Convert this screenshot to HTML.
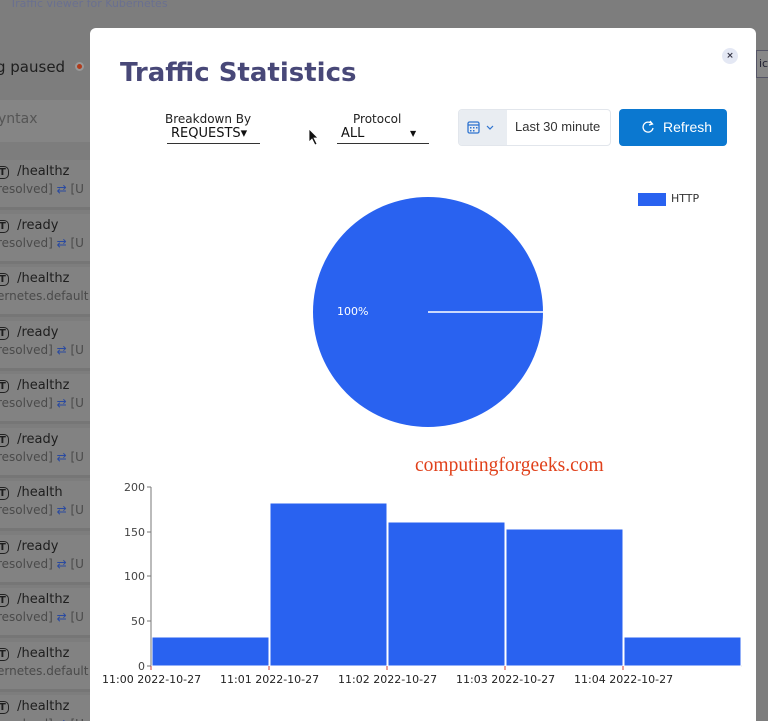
<!DOCTYPE html>
<html><head><meta charset="utf-8"><style>
*{margin:0;padding:0;box-sizing:border-box}
html,body{width:768px;height:721px;overflow:hidden}
body{background:#7d7d7d;font-family:"DejaVu Sans","Liberation Sans",sans-serif;position:relative}
.a{position:absolute;white-space:nowrap}
.row{position:absolute;left:0;width:90px;height:50px;background:#828282;border-bottom:3px solid #767676}
.p{font-size:13px;color:#1e1e1e}
.s{font-size:12px;color:#4a4a4a}
</style></head><body>
<div class="a" style="left:10px;top:-3px;font-size:11px;color:#6a7090">Traffic viewer for Kubernetes</div>
<div class="a" style="left:-4px;top:58px;font-size:15px;color:#1e1e1e">g paused</div>
<div class="a" style="left:75px;top:62px;width:9px;height:9px;border-radius:50%;background:#b03a1a;border:2px solid #999"></div>
<div class="a" style="left:0;top:100px;width:90px;height:42px;background:#858585"></div>
<div class="a" style="left:-2px;top:111px;font-size:14px;color:#555">yntax</div>
<div id="rows"></div>
<div class="a" style="left:756px;top:50px;width:12px;height:28px;border:1px solid #556;border-right:none;background:#888;font-size:11px;color:#223;padding:6px 0 0 2px">ic</div>

<div class="a" style="left:90px;top:28px;width:666px;height:693px;background:#fff;border-radius:6px 6px 0 0"></div>
<div class="a" style="left:120px;top:58px;font-size:26px;font-weight:bold;color:#484878;font-family:'DejaVu Sans',sans-serif">Traffic Statistics</div>
<div class="a" style="left:722px;top:48px;width:16px;height:16px;border-radius:50%;background:#e4e8f4;font-size:9px;color:#334;text-align:center;line-height:16px;font-weight:bold">×</div>

<div class="a" style="left:165px;top:112px;font-size:12px;color:#222">Breakdown By</div>
<div class="a" style="left:171px;top:126px;font-size:13px;color:#111">REQUESTS▾</div>
<div class="a" style="left:167px;top:143px;width:93px;height:1px;background:#333"></div>
<div class="a" style="left:353px;top:112px;font-size:12px;color:#222">Protocol</div>
<div class="a" style="left:341px;top:126px;font-size:13px;color:#111">ALL</div>
<div class="a" style="left:410px;top:129px;font-size:8px;color:#111">▼</div>
<div class="a" style="left:337px;top:143px;width:92px;height:1px;background:#333"></div>
<svg class="a" style="left:308px;top:128px" width="12" height="18"><path d="M1 1 L1 14 L4 11 L7 17 L9 16 L6 10 L10 10 Z" fill="#111" stroke="#fff" stroke-width=".8"/></svg>

<div class="a" style="left:458px;top:109px;width:153px;height:37px;border:1px solid #e2e6ec;border-radius:4px;background:#fff"></div>
<div class="a" style="left:459px;top:110px;width:48px;height:35px;background:#e9edf2;border-radius:3px 0 0 3px"></div>
<svg class="a" style="left:467px;top:120px" width="32" height="16"><rect x="1" y="2" width="11" height="11" rx="1.5" fill="none" stroke="#2f74d0" stroke-width="1.3"/><line x1="1" y1="5" x2="12" y2="5" stroke="#2f74d0" stroke-width="1.3"/><g fill="#2f74d0"><rect x="3" y="7" width="1.5" height="1.5"/><rect x="6" y="7" width="1.5" height="1.5"/><rect x="9" y="7" width="1.5" height="1.5"/><rect x="3" y="10" width="1.5" height="1.5"/><rect x="6" y="10" width="1.5" height="1.5"/></g><path d="M20 6 l3 3 l3 -3" fill="none" stroke="#2f74d0" stroke-width="1.2"/></svg>
<div class="a" style="left:515px;top:119px;font-size:13px;color:#333;font-family:'Liberation Sans',sans-serif">Last 30 minute</div>
<div class="a" style="left:619px;top:109px;width:108px;height:37px;background:#0b78d0;border-radius:4px"></div>
<svg class="a" style="left:641px;top:120px" width="14" height="14"><path d="M11 4 A5 5 0 1 0 12 8" fill="none" stroke="#fff" stroke-width="1.3"/><path d="M9 1 L11.5 4 L8 5" fill="none" stroke="#fff" stroke-width="1.3"/></svg>
<div class="a" style="left:663px;top:119px;font-size:14px;color:#fff;font-family:'Liberation Sans',sans-serif">Refresh</div>

<div class="a" style="left:638px;top:193px;width:28px;height:13px;background:#2962f0"></div>
<div class="a" style="left:671px;top:192px;font-size:11px;color:#333">HTTP</div>
<svg class="a" style="left:300px;top:184px" width="256" height="256"><circle cx="128" cy="128" r="115" fill="#2962f0"/><line x1="128" y1="128" x2="243" y2="128" stroke="#fff" stroke-width="1.5"/></svg>
<div class="a" style="left:337px;top:305px;font-size:11px;color:#fff">100%</div>

<div class="a" style="left:415px;top:455px;font-size:19.5px;color:#e0401a;font-family:'Liberation Serif',serif">computingforgeeks.com</div>

<svg class="a" style="left:90px;top:470px" width="678" height="230" font-family="DejaVu Sans" font-size="11" fill="#444">
<line x1="61" y1="17" x2="61" y2="196" stroke="#777"/>
<line x1="61" y1="196" x2="652" y2="196" stroke="#ccc"/>
<g stroke="#777"><line x1="57" y1="17" x2="61" y2="17"/><line x1="57" y1="62" x2="61" y2="62"/><line x1="57" y1="106" x2="61" y2="106"/><line x1="57" y1="151" x2="61" y2="151"/><line x1="57" y1="196" x2="61" y2="196"/></g>
<g text-anchor="end"><text x="55" y="21">200</text><text x="55" y="66">150</text><text x="55" y="110">100</text><text x="55" y="155">50</text><text x="55" y="200">0</text></g>
<g fill="#2962f0" stroke="#fff" stroke-width="1"><rect x="62" y="167" width="117" height="29"/><rect x="180" y="33" width="117" height="163"/><rect x="298" y="52" width="117" height="144"/><rect x="416" y="59" width="117" height="137"/><rect x="534" y="167" width="117" height="29"/></g>
<g stroke="#d04030"><line x1="61" y1="196" x2="61" y2="200"/><line x1="179" y1="196" x2="179" y2="200"/><line x1="297" y1="196" x2="297" y2="200"/><line x1="415" y1="196" x2="415" y2="200"/><line x1="533" y1="196" x2="533" y2="200"/></g>
<g fill="#222"><text x="12" y="213">11:00 2022-10-27</text><text x="130" y="213">11:01 2022-10-27</text><text x="248" y="213">11:02 2022-10-27</text><text x="366" y="213">11:03 2022-10-27</text><text x="484" y="213">11:04 2022-10-27</text></g>
</svg>
<script>
var p=["/healthz","/ready","/healthz","/ready","/healthz","/ready","/health","/ready","/healthz","/healthz","/healthz"];
var s=["resolved]","resolved]","ernetes.default","resolved]","resolved]","resolved]","resolved]","resolved]","resolved]","ernetes.default","resolved]"];
var h="";for(var i=0;i<p.length;i++){var y=160+i*53.5;
h+='<div class="row" style="top:'+y+'px"></div><div class="a p" style="left:-4px;top:'+(y+4)+'px"><span style="border:1px solid #222;border-radius:0 5px 5px 0;font-size:10px;padding:0 2px;font-weight:bold">T</span> &nbsp;'+p[i]+'</div><div class="a s" style="left:-3px;top:'+(y+22)+'px">'+s[i]+' <span style="color:#2a4aa0">⇄</span> [U</div>';}
document.getElementById("rows").innerHTML=h;
</script>
</body></html>
